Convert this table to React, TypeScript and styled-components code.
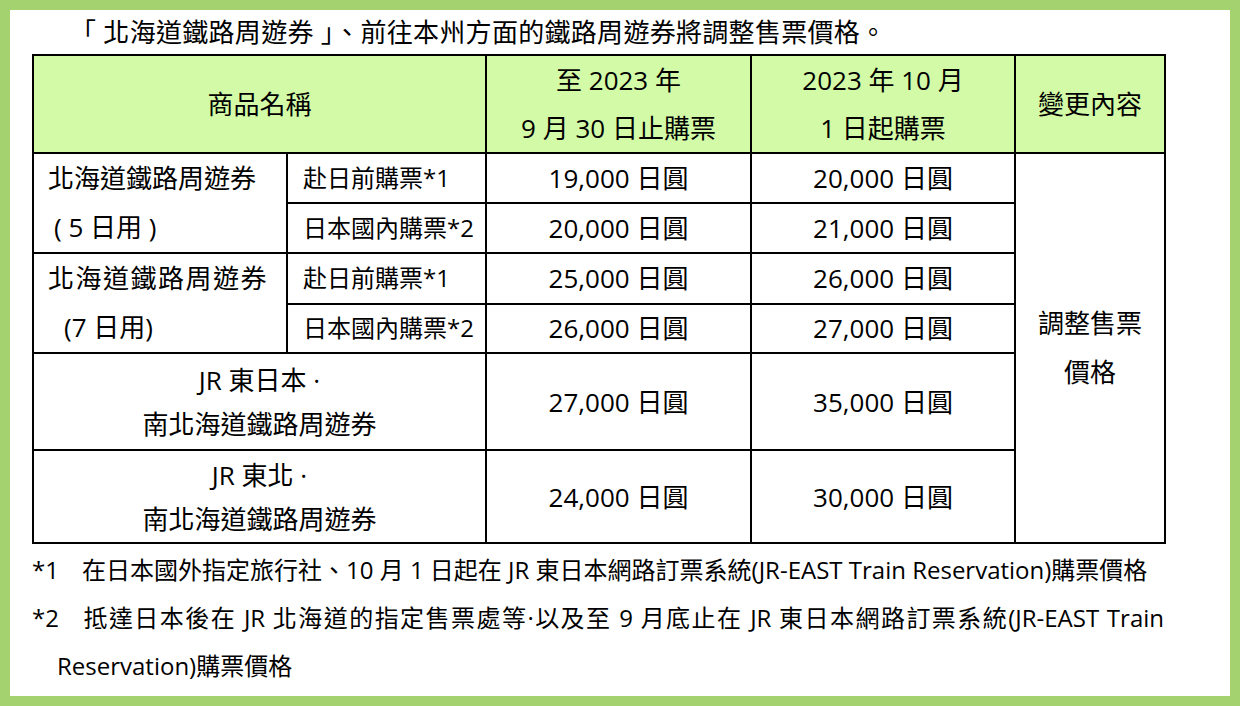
import React from "react";
import styled, { createGlobalStyle } from "styled-components";

const GlobalStyle = createGlobalStyle`
  html, body {
    margin: 0;
    padding: 0;
    background: #ffffff;
  }
  body {
    font-family: "Open Sans", "Noto Sans CJK TC", sans-serif;
    color: #000000;
  }
`;

// green frame around the whole notice
const Frame = styled.div`
  box-sizing: border-box;
  width: 1240px;
  height: 706px;
  border: 10px solid #a4d26e;
  padding: 0 64px 0 22px;
  background: #ffffff;
`;

const Title = styled.p`
  margin: 0;
  padding-left: 38px;
  font-size: 26px;
  line-height: 44px;
  letter-spacing: 0.3px;
  white-space: nowrap;
`;

const PriceTable = styled.table`
  width: 1134px;
  border-collapse: collapse;
  table-layout: fixed;
  border: 2px solid #000;
`;

const HeadCell = styled.th`
  background: #d3fba7;
  border: 2px solid #000;
  font-weight: normal;
  font-size: 26px;
  line-height: 48px;
  text-align: center;
  vertical-align: middle;
  padding: 0;
`;

const Cell = styled.td<{ $align?: string; $size?: number; $lh?: number; $pad?: number }>`
  border: 2px solid #000;
  padding: 0 0 0 ${(p) => p.$pad ?? 0}px;
  font-size: ${(p) => p.$size ?? 26}px;
  line-height: ${(p) => p.$lh ?? 44}px;
  text-align: ${(p) => p.$align ?? "center"};
  vertical-align: middle;
  white-space: nowrap;
`;

const Line = styled.span<{ $indent?: number; $spacing?: number }>`
  display: block;
  padding-left: ${(p) => p.$indent ?? 0}px;
  letter-spacing: ${(p) => p.$spacing ?? 0}px;
`;

const Notes = styled.div`
  width: 1132px;
  padding-top: 2px;
`;

const Note = styled.p`
  margin: 0;
  padding-left: 25px;
  text-indent: -25px;
  font-size: 24px;
  line-height: 48px;
  text-align: justify;
`;

const Mark = styled.span`
  display: inline-block;
  width: 50px;
  text-indent: 0;
`;

const priceRows = [
  { old: "19,000 日圓", next: "20,000 日圓" },
  { old: "20,000 日圓", next: "21,000 日圓" },
  { old: "25,000 日圓", next: "26,000 日圓" },
  { old: "26,000 日圓", next: "27,000 日圓" },
];

export default function App() {
  return (
    <>
      <GlobalStyle />
      <Frame>
        <Title>「 北海道鐵路周遊券 」、前往本州方面的鐵路周遊券將調整售票價格。</Title>
        <PriceTable>
          <colgroup>
            <col style={{ width: 254 }} />
            <col style={{ width: 199 }} />
            <col style={{ width: 265 }} />
            <col style={{ width: 264 }} />
            <col style={{ width: 150 }} />
          </colgroup>
          <thead>
            <tr style={{ height: 95 }}>
              <HeadCell colSpan={2}>商品名稱</HeadCell>
              <HeadCell>
                至 2023 年<br />9 月 30 日止購票
              </HeadCell>
              <HeadCell>
                2023 年 10 月<br />1 日起購票
              </HeadCell>
              <HeadCell>變更內容</HeadCell>
            </tr>
          </thead>
          <tbody>
            <tr style={{ height: 48 }}>
              <Cell rowSpan={2} $align="left" $pad={14} $lh={49}>
                <Line>北海道鐵路周遊券</Line>
                <Line $indent={6}>( 5 日用 )</Line>
              </Cell>
              <Cell $align="left" $pad={15} $size={24}>赴日前購票*1</Cell>
              <Cell>{priceRows[0].old}</Cell>
              <Cell>{priceRows[0].next}</Cell>
              <Cell rowSpan={6} $lh={49}>
                調整售票
                <br />
                價格
              </Cell>
            </tr>
            <tr style={{ height: 48 }}>
              <Cell $align="left" $pad={15} $size={24}>日本國內購票*2</Cell>
              <Cell>{priceRows[1].old}</Cell>
              <Cell>{priceRows[1].next}</Cell>
            </tr>
            <tr style={{ height: 49 }}>
              <Cell rowSpan={2} $align="left" $pad={14} $lh={49}>
                <Line $spacing={1.5}>北海道鐵路周遊券</Line>
                <Line $indent={16}>(7 日用)</Line>
              </Cell>
              <Cell $align="left" $pad={15} $size={24}>赴日前購票*1</Cell>
              <Cell>{priceRows[2].old}</Cell>
              <Cell>{priceRows[2].next}</Cell>
            </tr>
            <tr style={{ height: 48 }}>
              <Cell $align="left" $pad={15} $size={24}>日本國內購票*2</Cell>
              <Cell>{priceRows[3].old}</Cell>
              <Cell>{priceRows[3].next}</Cell>
            </tr>
            <tr style={{ height: 97 }}>
              <Cell colSpan={2}>
                JR 東日本 ·<br />南北海道鐵路周遊券
              </Cell>
              <Cell>27,000 日圓</Cell>
              <Cell>35,000 日圓</Cell>
            </tr>
            <tr style={{ height: 93 }}>
              <Cell colSpan={2}>
                JR 東北 ·<br />南北海道鐵路周遊券
              </Cell>
              <Cell>24,000 日圓</Cell>
              <Cell>30,000 日圓</Cell>
            </tr>
          </tbody>
        </PriceTable>
        <Notes>
          <Note>
            <Mark>*1</Mark>在日本國外指定旅行社、10 月 1 日起在 JR 東日本網路訂票系統(JR-EAST Train Reservation)購票價格
          </Note>
          <Note>
            <Mark>*2</Mark>抵達日本後在 JR 北海道的指定售票處等·以及至 9 月底止在 JR 東日本網路訂票系統(JR-EAST Train Reservation)購票價格
          </Note>
        </Notes>
      </Frame>
    </>
  );
}
